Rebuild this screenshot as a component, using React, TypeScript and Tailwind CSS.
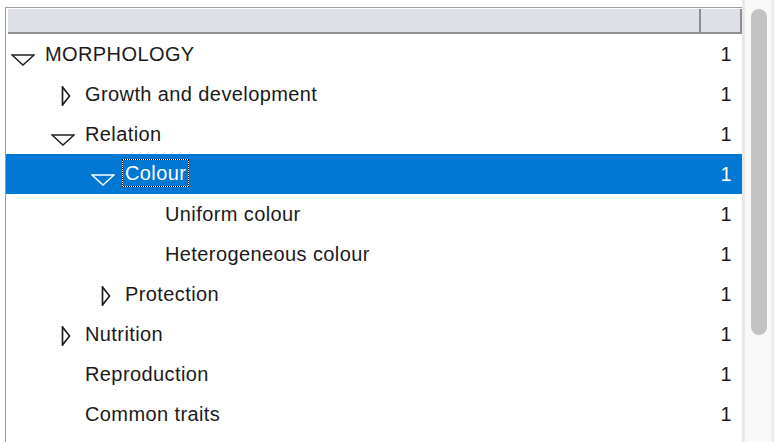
import React from 'react';

type Node = {
  label: string;
  level: number;
  toggle?: 'open' | 'closed';
  count: number;
  selected?: boolean;
};

const rows: Node[] = [
  { label: 'MORPHOLOGY', level: 0, toggle: 'open', count: 1 },
  { label: 'Growth and development', level: 1, toggle: 'closed', count: 1 },
  { label: 'Relation', level: 1, toggle: 'open', count: 1 },
  { label: 'Colour', level: 2, toggle: 'open', count: 1, selected: true },
  { label: 'Uniform colour', level: 3, count: 1 },
  { label: 'Heterogeneous colour', level: 3, count: 1 },
  { label: 'Protection', level: 2, toggle: 'closed', count: 1 },
  { label: 'Nutrition', level: 1, toggle: 'closed', count: 1 },
  { label: 'Reproduction', level: 1, count: 1 },
  { label: 'Common traits', level: 1, count: 1 },
];

const indents = ['w-0', 'w-[40px]', 'w-[80px]', 'w-[120px]'];

function Toggle({ kind, selected }: { kind?: 'open' | 'closed'; selected?: boolean }) {
  const stroke = selected ? '#ffffff' : '#1f1f1f';
  return (
    <div className="flex w-[39px] shrink-0 items-center self-stretch">
      {kind === 'open' && (
        <svg width="24" height="12" viewBox="0 0 24 12" className="ml-[5px] translate-y-[6px]">
          <polygon points="1,1 23,1 12,11" fill="none" stroke={stroke} strokeWidth="1.5" />
        </svg>
      )}
      {kind === 'closed' && (
        <svg width="10" height="20" viewBox="0 0 10 20" className="ml-[15px] translate-y-[2px]">
          <polygon points="1.5,1 8.5,10 1.5,19" fill="none" stroke={stroke} strokeWidth="1.7" />
        </svg>
      )}
    </div>
  );
}

function Row({ node }: { node: Node }) {
  const sel = node.selected;
  return (
    <div
      className={`flex h-[40px] items-center ${sel ? 'bg-[#0078d4] text-white' : 'text-[#1a1a1a]'}`}
    >
      <div className={`${indents[node.level]} shrink-0`} />
      <Toggle kind={node.toggle} selected={sel} />
      <div className="flex-1">
        {sel ? (
          <span className="relative -ml-[3px] inline-flex h-[28px] translate-y-[-1px] items-center border border-white px-[2px]">
            <span className="absolute -inset-[1px] border border-dotted border-black" />
            {node.label}
          </span>
        ) : (
          <span>{node.label}</span>
        )}
      </div>
      <div className="w-[40px] shrink-0 pr-[10px] text-right">{node.count}</div>
    </div>
  );
}

export default function App() {
  return (
    <div
      className="flex h-[442px] w-[774px] overflow-hidden bg-white text-[20px] tracking-[0.4px]"
      style={{ fontFamily: '"Liberation Sans", Arial, sans-serif' }}
    >
      <div className="flex-1 pl-[5px] pt-[7px]">
        <div className="h-full border-l border-t border-[#9f9f9f]">
          <div className="ml-[2px] mt-[1px] flex h-[25px] border-b-2 border-[#8e8e8e] bg-[#dde1e7]">
            <div className="flex-1 border-r-2 border-[#8e8e8e]" />
            <div className="w-[41px] border-r-2 border-[#8e8e8e]" />
          </div>
          <div>
            {rows.map((r) => (
              <Row key={r.label} node={r} />
            ))}
          </div>
        </div>
      </div>
      <div className="flex w-[32px] border-l-[3px] border-r-2 border-[#e8e8e8] bg-[#f8f8f8] pl-[6px] pt-[9px]">
        <div className="h-[326px] w-[16px] rounded-full bg-[#c2c2c2]" />
      </div>
    </div>
  );
}
